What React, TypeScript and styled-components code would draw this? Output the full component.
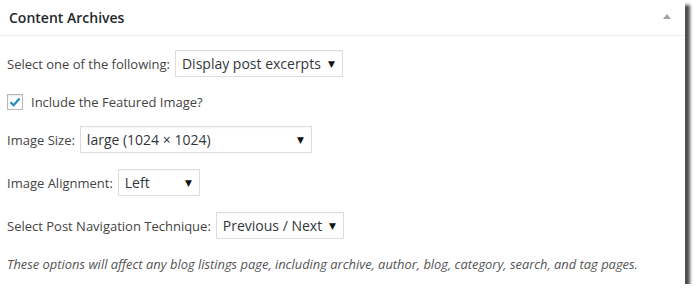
import styled, { createGlobalStyle } from 'styled-components'

const GlobalStyle = createGlobalStyle`
    html, body {
        margin: 0;
        padding: 0;
        background: #ffffff;
    }
    body {
        font-family: "Open Sans", "Liberation Sans", sans-serif;
        color: #444;
    }
`

interface SelectProps {
    value: string
    width: number
}

const Select = ({ value, width }: SelectProps) => {
    return (
        <SelectBox style={{ width }}>
            <span>{value}</span>
            <Caret>▼</Caret>
        </SelectBox>
    )
}

const App = () => {
    return (
        <>
            <GlobalStyle />
            <Panel>
                <Header>
                    <Title>Content Archives</Title>
                    <Toggle width="8" height="5" viewBox="0 0 8 5">
                        <polygon points="4,0 8,5 0,5" fill="#a0a5aa" />
                    </Toggle>
                </Header>
                <Body>
                    <Row>
                        <Label>Select one of the following:</Label>
                        <Select value="Display post excerpts" width={168} />
                    </Row>
                    <CheckRow>
                        <CheckBox>
                            <svg width="14" height="14" viewBox="0 0 14 14">
                                <path d="M2.5 7.2 L5.6 10.2 L11.6 3.4" fill="none" stroke="#1e8cbe" strokeWidth="2.2" />
                            </svg>
                        </CheckBox>
                        <Label>Include the Featured Image?</Label>
                    </CheckRow>
                    <Row>
                        <Label>Image Size:</Label>
                        <Select value="large (1024 × 1024)" width={232} />
                    </Row>
                    <Row>
                        <Label>Image Alignment:</Label>
                        <Select value="Left" width={82} />
                    </Row>
                    <Row>
                        <Label>Select Post Navigation Technique:</Label>
                        <Select value="Previous / Next" width={128} />
                    </Row>
                    <Note>
                        These options will affect any blog listings page, including archive, author, blog, category, search, and tag pages.
                    </Note>
                </Body>
            </Panel>
        </>
    )
}
export default App


const Panel = styled.div`
    width: 685px;
    height: 284px;
    background: #ffffff;
    box-shadow: 5px 5px 3px rgba(0, 0, 0, 0.7);
    box-sizing: border-box;
`
const Header = styled.div`
    display: flex;
    align-items: center;
    justify-content: space-between;

    height: 35px;
    padding: 0 14px 0 9px;
    border-bottom: 1px solid #eeeeee;
`
const Title = styled.h2`
    margin: 0;
    font-size: 14px;
    font-weight: 600;
    color: #23282d;
`
const Toggle = styled.svg`
    margin-bottom: 2px;
`
const Body = styled.div`
    display: flex;
    flex-direction: column;
    gap: 16px;

    padding: 14px 7px 0;
`
const Row = styled.div`
    display: flex;
    align-items: center;
    gap: 5px;
    height: 27px;
`
const CheckRow = styled.div`
    display: flex;
    align-items: center;
    gap: 8px;
    height: 17px;
`
const Label = styled.span`
    font-size: 13px;
    color: #444;
`
const CheckBox = styled.span`
    display: flex;
    align-items: center;
    justify-content: center;

    width: 16px;
    height: 16px;
    box-sizing: border-box;
    border: 1px solid #b4b9be;
    box-shadow: inset 0 1px 2px rgba(0, 0, 0, 0.1);
`
const SelectBox = styled.div`
    display: flex;
    align-items: center;
    justify-content: space-between;

    height: 27px;
    padding: 0 7px 0 6px;
    box-sizing: border-box;
    border: 1px solid #dddddd;
    box-shadow: inset 0 1px 2px rgba(0, 0, 0, 0.04);
    font-size: 14px;
    color: #32373c;
`
const Caret = styled.span`
    font-family: "DejaVu Sans", sans-serif;
    font-size: 9px;
    color: #111;
`
const Note = styled.p`
    margin: 0;
    font-size: 12.9px;
    font-style: italic;
    line-height: 18px;
    color: #555;
`
